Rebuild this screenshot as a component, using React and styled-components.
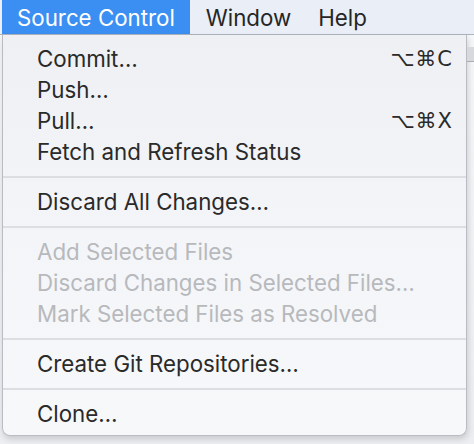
import styled, { createGlobalStyle } from "styled-components";

const GlobalStyle = createGlobalStyle`
  html, body {
    margin: 0;
    padding: 0;
    background: #f3f4f6;
  }
  body {
    font-family: Inter, "Liberation Sans", sans-serif;
    -webkit-font-smoothing: antialiased;
  }
`;

const Screen = styled.div`
  width: 474px;
  height: 444px;
  overflow: hidden;
  background: linear-gradient(180deg, #f7f8fa 0%, #eceef1 100%);
  display: flex;
  flex-direction: column;
`;

const MenuBar = styled.div`
  height: 34px;
  flex-shrink: 0;
  display: flex;
  align-items: stretch;
  padding-left: 2px;
  background: #e9eef7;
  border-bottom: 1px solid #aeb4bd;
`;

const MenuTitle = styled.div`
  display: flex;
  align-items: center;
  padding: 0 ${(p) => p.$pad}px 0 ${(p) => p.$left}px;
  font-size: 22.3px;
  color: ${(p) => (p.$active ? "#ffffff" : "#262626")};
  background: ${(p) => (p.$active ? "#3b8ef2" : "transparent")};
`;

const Body = styled.div`
  flex: 1;
  display: flex;
  align-items: flex-start;
  padding-left: 1px;
`;

const Panel = styled.div`
  width: 463px;
  margin-left: 1px;
  padding: 8px 0 6px;
  background: linear-gradient(180deg, #eef0f3 0%, #f4f5f8 50%, #f7f8fa 100%);
  border: 1px solid #b9bcc2;
  border-top: none;
  border-radius: 0 0 8px 8px;
  box-shadow: 1px 3px 6px rgba(0, 0, 0, 0.16);
  display: flex;
  flex-direction: column;
`;

const Item = styled.div`
  height: 31px;
  display: flex;
  align-items: center;
  justify-content: space-between;
  padding: 0 13px 0 34px;
  font-size: 22.3px;
  color: ${(p) => (p.$disabled ? "#b7b9bc" : "#2a2a2a")};
`;

const Shortcut = styled.span`
  font-family: "DejaVu Sans", Inter, sans-serif;
  font-size: 21px;
  letter-spacing: 1px;
  color: #2a2a2a;
`;

const Separator = styled.div`
  height: 19px;
  display: flex;
  align-items: center;
  &::after {
    content: "";
    flex: 1;
    height: 2px;
    background: #dcdee2;
  }
`;

const Backdrop = styled.div`
  flex: 1;
  align-self: stretch;
  display: flex;
  flex-direction: column;
`;

const BackBand = styled.div`
  margin-top: 12px;
  height: 14px;
  background: #d8d9dc;
  border-bottom: 1px solid #a9abaf;
`;

const groups = [
  [
    { label: "Commit…", key: "⌥⌘C" },
    { label: "Push…" },
    { label: "Pull…", key: "⌥⌘X" },
    { label: "Fetch and Refresh Status" },
  ],
  [{ label: "Discard All Changes…" }],
  [
    { label: "Add Selected Files", disabled: true },
    { label: "Discard Changes in Selected Files…", disabled: true },
    { label: "Mark Selected Files as Resolved", disabled: true },
  ],
  [{ label: "Create Git Repositories…" }],
  [{ label: "Clone…" }],
];

export default function App() {
  return (
    <>
      <GlobalStyle />
      <Screen>
        <MenuBar>
          <MenuTitle $active $left={15} $pad={15}>
            Source Control
          </MenuTitle>
          <MenuTitle $left={16} $pad={12}>
            Window
          </MenuTitle>
          <MenuTitle $left={15} $pad={14}>
            Help
          </MenuTitle>
        </MenuBar>
        <Body>
          <Panel>
            {groups.map((group, i) => (
              <div key={i}>
                {i > 0 && <Separator />}
                {group.map((item) => (
                  <Item key={item.label} $disabled={item.disabled}>
                    <span>{item.label}</span>
                    {item.key && <Shortcut>{item.key}</Shortcut>}
                  </Item>
                ))}
              </div>
            ))}
          </Panel>
          <Backdrop>
            <BackBand />
          </Backdrop>
        </Body>
      </Screen>
    </>
  );
}
